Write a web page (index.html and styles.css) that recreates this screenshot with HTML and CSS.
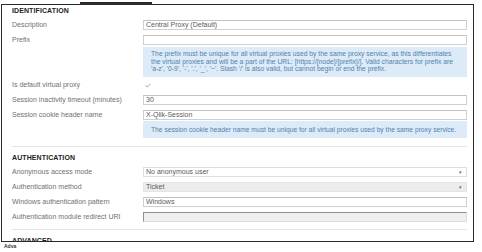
FILE: index.html
```html
<!DOCTYPE html>
<html>
<head>
<meta charset="utf-8">
<link rel="stylesheet" href="styles.css">
</head>
<body>
<div class="top-strip"><span class="frag frag-a"></span><span class="frag frag-b"></span></div>
<div class="frame">
  <h3 class="heading">IDENTIFICATION</h3>
  <div class="row">
    <div class="label">Description</div>
    <div class="field"><div class="input">Central Proxy (Default)</div></div>
  </div>
  <div class="row row-note">
    <div class="label">Prefix</div>
    <div class="field">
      <div class="input"></div>
      <div class="note note-multi">The prefix must be unique for all virtual proxies used by the same proxy service, as this differentiates<br>the virtual proxies and will be a part of the URL: [https://[node]/[prefix]/]. Valid characters for prefix are<br>'a-z', '0-9', '-', '.', '_', '~'. Slash '/' is also valid, but cannot begin or end the prefix.</div>
    </div>
  </div>
  <div class="row">
    <div class="label">Is default virtual proxy</div>
    <div class="field check"><svg width="6" height="5" viewBox="0 0 6 5"><path d="M0.6 2.6 L2.2 4.1 L5.4 0.8" fill="none" stroke="#a8a8a8" stroke-width="1"/></svg></div>
  </div>
  <div class="row">
    <div class="label">Session inactivity timeout (minutes)</div>
    <div class="field"><div class="input">30</div></div>
  </div>
  <div class="row row-last">
    <div class="label">Session cookie header name</div>
    <div class="field">
      <div class="input">X-Qlik-Session</div>
      <div class="note note-single">The session cookie header name must be unique for all virtual proxies used by the same proxy service.</div>
    </div>
  </div>
  <div class="sep sep-first"></div>
  <h3 class="heading">AUTHENTICATION</h3>
  <div class="row">
    <div class="label">Anonymous access mode</div>
    <div class="field"><div class="input select"><span>No anonymous user</span><span class="arrow">▾</span></div></div>
  </div>
  <div class="row">
    <div class="label">Authentication method</div>
    <div class="field"><div class="input select select-gray"><span>Ticket</span><span class="arrow">▾</span></div></div>
  </div>
  <div class="row">
    <div class="label">Windows authentication pattern</div>
    <div class="field"><div class="input">Windows</div></div>
  </div>
  <div class="row row-last">
    <div class="label">Authentication module redirect URI</div>
    <div class="field"><div class="input disabled"></div></div>
  </div>
  <div class="sep"></div>
  <h3 class="heading">ADVANCED</h3>
</div>
<div class="below">Adva</div>
</body>
</html>
```
FILE: styles.css
```css
html, body {
  margin: 0;
  padding: 0;
}
body {
  width: 482px;
  height: 252px;
  overflow: hidden;
  background: #ffffff;
  font-family: "Liberation Sans", Arial, sans-serif;
  color: #666666;
}
.top-strip {
  height: 4px;
  display: flex;
  align-items: flex-end;
  padding-left: 80px;
}
.frag {
  display: block;
  background: #2a2a2a;
  height: 2px;
}
.frag-a {
  width: 72px;
}
.frag-b {
  width: 0;
}
.frame {
  box-sizing: border-box;
  margin-left: 1px;
  width: 473px;
  height: 238px;
  border: 1px solid #2b2b2b;
  overflow: hidden;
  padding: 0 6px 0 10px;
}
.heading {
  margin: 0;
  padding-top: 2px;
  margin-bottom: 5px;
  font-size: 7px;
  line-height: 8px;
  height: 8px;
  font-weight: bold;
  color: #222222;
  letter-spacing: 0.1px;
}
.row {
  display: grid;
  grid-template-columns: 131px 1fr;
  margin-bottom: 5px;
}
.row-note {
  margin-bottom: 3px;
}
.row-last {
  margin-bottom: 0;
}
.label {
  font-size: 7px;
  line-height: 10px;
  height: 10px;
  color: #707070;
  white-space: nowrap;
}
.input {
  box-sizing: border-box;
  height: 10px;
  border: 1px solid #cfcfcf;
  border-top-color: #c2c2c2;
  font-size: 7px;
  line-height: 8px;
  padding: 0 2px;
  color: #5a5a5a;
  background: #ffffff;
  white-space: nowrap;
}
.select {
  display: flex;
  justify-content: space-between;
  padding-right: 4px;
  border-color: #dedede;
}
.arrow {
  font-size: 5px;
  color: #666666;
}
.select-gray {
  background: #ececec;
  border-color: #e4e4e4;
}
.disabled {
  background: #efefef;
  border-color: #8f8f8f #dcdcdc #dcdcdc #8f8f8f;
}
.check {
  display: flex;
  align-items: center;
  padding-left: 2px;
  height: 10px;
}
.note {
  background: #dcebf7;
  color: #5282ad;
  white-space: nowrap;
  padding-left: 8px;
}
.note-multi {
  margin-top: 2px;
  height: 30px;
  box-sizing: border-box;
  padding-top: 3px;
  font-size: 6.75px;
  line-height: 7.5px;
}
.note-single {
  margin-top: 1px;
  height: 17px;
  box-sizing: border-box;
  padding-top: 5px;
  font-size: 6.7px;
  line-height: 7px;
}
.sep {
  height: 1px;
  background: #e4e4e4;
  margin: 7px 0 7px 0;
}
.sep-first {
  margin-top: 8px;
}
.sep + .heading {
  padding-top: 0;
}
.below {
  padding-left: 4px;
  font-size: 5px;
  line-height: 8px;
  font-weight: bold;
  color: #333333;
}
```
